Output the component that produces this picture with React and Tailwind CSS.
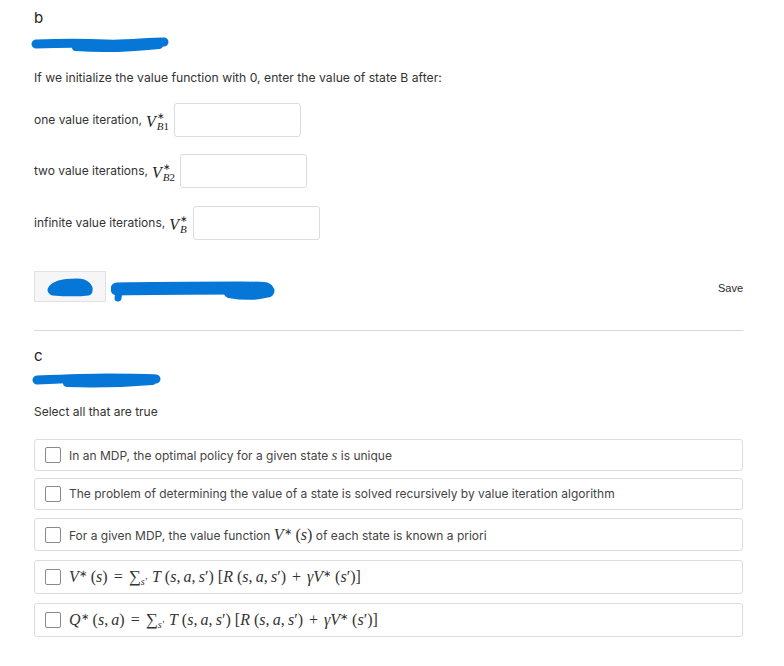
import React from 'react';

const BLUE = '#0677d6';

function Scribble({ w, h, paths, className = '' }) {
  return (
    <svg width={w} height={h} viewBox={`0 0 ${w} ${h}`} className={className} fill="none">
      {paths.map((p, i) => (
        <path key={i} d={p.d} stroke={BLUE} strokeWidth={p.sw} strokeLinecap="round" strokeLinejoin="round" />
      ))}
    </svg>
  );
}

function Sym({ base, sub }) {
  return (
    <span className="inline-flex items-center font-['Liberation_Serif',serif] text-[#222]">
      <span className="italic text-[16px] leading-[18px]">{base}</span>
      <span className="ml-[1px] inline-flex flex-col">
        <span className="h-[9px] text-[9px] leading-[9px]">{'\u2217'}</span>
        <span className="h-[11px] text-[11px] leading-[11px]">{sub}</span>
      </span>
    </span>
  );
}

function Field({ label, sub }) {
  return (
    <div className="flex h-[34px] items-center">
      <span>{label}</span>
      <span className="ml-[4px] mt-[3px]">
        <Sym base="V" sub={sub} />
      </span>
      <div className="ml-[5px] h-[34px] w-[127px] rounded-[3px] border border-[#dcdcdc] bg-white" />
    </div>
  );
}

const I = ({ children }) => <span className="italic">{children}</span>;
const Star = () => <sup className="text-[10px]">∗</sup>;

function Formula({ lhs }) {
  return (
    <span className="font-['Liberation_Serif',serif] text-[16px] text-[#333] whitespace-nowrap">
      {lhs}
      <span className="mx-[6px]">=</span>
      <span className="text-[17px]">{'\u2211'}</span>
      <sub className="text-[10px] italic">s′</sub>
      <span className="ml-[5px]"><I>T</I></span> (<I>s</I>,&thinsp;<I>a</I>,&thinsp;<I>s</I>′) [<I>R</I> (<I>s</I>,&thinsp;<I>a</I>,&thinsp;<I>s</I>′)
      <span className="mx-[6px]">+</span>
      <I>γV</I>
      <Star /> (<I>s</I>′)]
    </span>
  );
}

function Option({ h, mt, children }) {
  return (
    <div
      className={`flex items-center rounded-[3px] border border-[#dcdcdc] bg-white pl-[10px] ${h} ${mt}`}
    >
      <span className="h-[16px] w-[16px] shrink-0 rounded-[2px] border border-[#8a8a8a] bg-white" />
      <span className="ml-[8px]">{children}</span>
    </div>
  );
}

export default function App() {
  return (
    <div className="min-h-screen bg-white font-['Inter',sans-serif] text-[12px] text-[#333]">
      <div className="pl-[34px] pr-[41px]">
        {/* section b */}
        <div className="pt-[9px] text-[15px] leading-[18px] text-[#222]">b</div>
        <Scribble
          w={140}
          h={22}
          className="-ml-[3px] mt-[7px]"
          paths={[
            { d: 'M5 10 C 30 9, 55 9, 75 10 S 115 8, 133 8', sw: 9 },
            { d: 'M45 13 C 70 15, 100 14, 128 11', sw: 8 },
          ]}
        />
        <div className="mt-[14px] text-[12.2px] leading-[16px]">
          If we initialize the value function with 0, enter the value of state B after:
        </div>

        <div className="mt-[17px]">
          <Field label="one value iteration," sub={<><span className="italic">B</span>1</>} />
        </div>
        <div className="mt-[17px]">
          <Field label="two value iterations," sub={<><span className="italic">B</span>2</>} />
        </div>
        <div className="mt-[18px]">
          <Field label="infinite value iterations," sub={<span className="italic">B</span>} />
        </div>

        {/* toolbar row */}
        <div className="mt-[31px] flex items-start">
          <div className="flex h-[31px] w-[72px] items-center justify-center border border-[#e0e0e0] bg-[#f6f6f6]">
            <Scribble
              w={50}
              h={22}
              paths={[
                { d: 'M7 14 C 10 8, 22 7, 32 7 C 40 7, 44 11, 43 15 C 35 16, 20 16, 8 15', sw: 9 },
                { d: 'M10 13 L 40 12', sw: 8 },
              ]}
            />
          </div>
          <Scribble
            w={164}
            h={26}
            className="ml-[5px] mt-[8px]"
            paths={[
              { d: 'M6 10 C 50 9, 100 9, 130 9 S 155 10, 157 12', sw: 13 },
              { d: 'M8 13 L 7 19', sw: 7 },
              { d: 'M118 14 C 135 17, 150 16, 156 13', sw: 10 },
            ]}
          />
          <span className="ml-auto mt-[10px] font-['Liberation_Sans',sans-serif] text-[11px] leading-[14px] text-[#1f2d2d]">
            Save
          </span>
        </div>

        <div className="mt-[25px] h-px bg-[#d9d9d9]" />

        {/* section c */}
        <div className="mt-[16px] text-[15px] leading-[18px] text-[#222]">c</div>
        <Scribble
          w={132}
          h={22}
          className="-ml-[2px] mt-[5px]"
          paths={[
            { d: 'M5 10 C 30 9, 55 8, 75 8 S 115 8, 124 9', sw: 9 },
            { d: 'M35 13 C 60 14, 95 13, 120 11', sw: 8 },
          ]}
        />
        <div className="mt-[12px] leading-[16px]">Select all that are true</div>

        <div className="mt-[19px] flex flex-col text-[#444]">
          <Option h="h-[32px]" mt="">
            In an MDP, the optimal policy for a given state{' '}
            <span className="font-['Liberation_Serif',serif] italic text-[15px]">s</span> is unique
          </Option>
          <Option h="h-[32px]" mt="mt-[7px]">
            The problem of determining the value of a state is solved recursively by value iteration algorithm
          </Option>
          <Option h="h-[33px]" mt="mt-[8px]">
            For a given MDP, the value function{' '}
            <span className="font-['Liberation_Serif',serif] text-[16px] text-[#333]">
              <I>V</I>
              <Star /> (<I>s</I>)
            </span>{' '}
            of each state is known a priori
          </Option>
          <Option h="h-[34px]" mt="mt-[9px]">
            <Formula
              lhs={
                <>
                  <I>V</I>
                  <Star /> (<I>s</I>)
                </>
              }
            />
          </Option>
          <Option h="h-[34px]" mt="mt-[9px]">
            <Formula
              lhs={
                <>
                  <I>Q</I>
                  <Star /> (<I>s</I>,&thinsp;<I>a</I>)
                </>
              }
            />
          </Option>
        </div>
      </div>
    </div>
  );
}
